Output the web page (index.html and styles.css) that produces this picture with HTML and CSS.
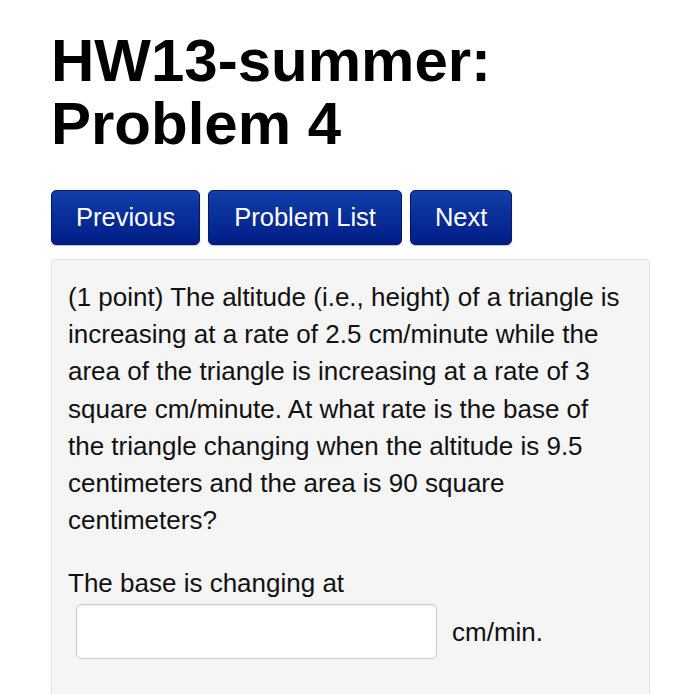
FILE: index.html
```html
<!DOCTYPE html>
<html>
<head>
<meta charset="utf-8">
<link rel="stylesheet" href="styles.css">
</head>
<body>
<div class="page">
  <h1 class="title"><span class="line">HW13-summer:</span><span class="line">Problem 4</span></h1>
  <div class="nav">
    <a class="btn">Previous</a>
    <a class="btn wide">Problem List</a>
    <a class="btn">Next</a>
  </div>
  <div class="well">
    <p class="problem">(1 point) The altitude (i.e., height) of a triangle is increasing at a rate of 2.5 cm/minute while the area of the triangle is increasing at a rate of 3 square cm/minute. At what rate is the base of the triangle changing when the altitude is 9.5 centimeters and the area is 90 square centimeters?</p>
    <p class="answer">The base is changing at</p>
    <div class="answer-row">
      <input class="field" type="text">
      <span class="unit">cm/min.</span>
    </div>
  </div>
</div>
</body>
</html>
```
FILE: styles.css
```css
html, body {
  margin: 0;
  padding: 0;
  background: #ffffff;
}
body {
  font-family: "Liberation Sans", Arial, sans-serif;
  color: #111111;
}
.page {
  padding: 29px 0 0 51px;
  width: 599px;
}
.title {
  margin: 0;
  font-size: 60px;
  font-weight: bold;
  color: #000000;
}
.line {
  display: block;
  line-height: 63px;
}
.nav {
  display: flex;
  gap: 8px;
  margin-top: 35px;
}
.btn {
  display: flex;
  align-items: center;
  height: 53px;
  padding: 0 24px;
  font-size: 25.5px;
  color: #ffffff;
  background: linear-gradient(#123fa9, #001c86);
  border: 1px solid #001a6e;
  border-radius: 5px;
  box-shadow: 0 1px 1px rgba(0,0,0,0.25);
}
.btn.wide {
  padding: 0 25px;
}
.well {
  margin-top: 14px;
  background: #f5f5f5;
  border: 1px solid #e3e3e3;
  border-radius: 4px;
  padding: 19px 18px 40px 16px;
  font-size: 26px;
  line-height: 37.2px;
}
.problem {
  margin: 0 0 26px 0;
}
.answer {
  margin: 0;
}
.answer-row {
  display: flex;
  align-items: center;
  gap: 15px;
  padding-left: 8px;
  margin-top: 1px;
}
.field {
  width: 361px;
  height: 55px;
  box-sizing: border-box;
  margin: 0;
  border: 1px solid #cccccc;
  border-radius: 5px;
  background: #ffffff;
  box-shadow: inset 0 1px 2px rgba(0,0,0,0.08);
  font-size: 24px;
}
.unit {
  padding-top: 2px;
}
```
